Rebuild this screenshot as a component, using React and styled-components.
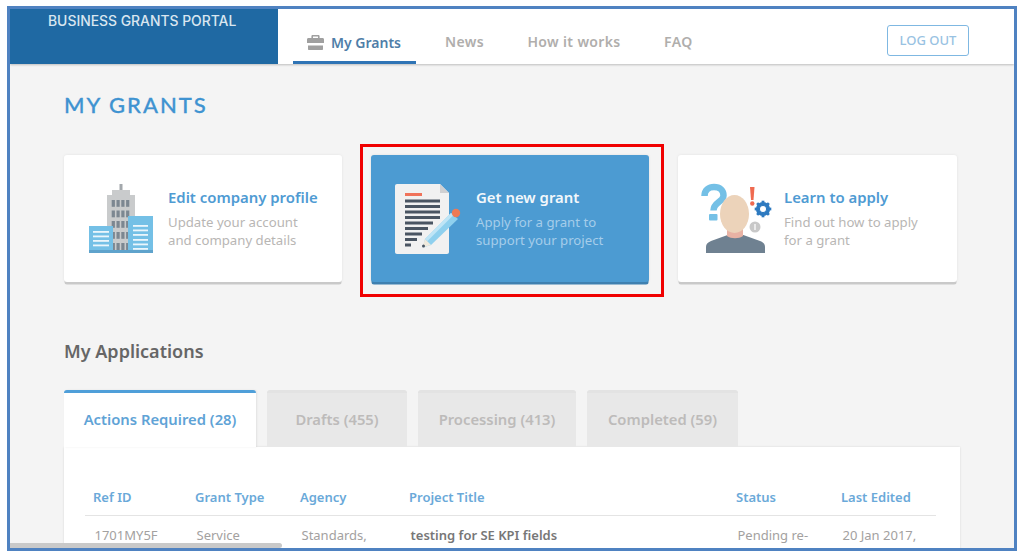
import React from "react";
import styled, { createGlobalStyle } from "styled-components";

const Global = createGlobalStyle`
  html, body { margin: 0; padding: 0; background: #fff; }
  body { font-family: "Noto Sans", "Open Sans", sans-serif; }
  * { box-sizing: border-box; }
`;

const Frame = styled.div`
  position: relative;
  width: 1010px;
  height: 545px;
  margin: 6px 0 0 7px;
  border: 3px solid #4f82c1;
  background: #f4f4f4;
  overflow: hidden;
`;

const Header = styled.header`
  display: flex;
  height: 55px;
  background: #fff;
  box-shadow: 0 1px 2px rgba(0, 0, 0, 0.22);
`;

const Brand = styled.div`
  width: 268px;
  background: #1f69a3;
  color: #d9e6f0;
  font-family: "Inter", sans-serif;
  font-size: 13.9px;
  font-weight: 500;
  line-height: 15px;
  padding: 5px 0 0 38px;
  white-space: nowrap;
`;

const Nav = styled.nav`
  display: flex;
  margin-left: 15px;
  gap: 43.5px;
`;

const NavItem = styled.a`
  display: flex;
  align-items: center;
  gap: 7px;
  height: 55px;
  padding: ${(p) => (p.$active ? "14px 15px 0 14px" : "10px 0 0")};
  margin-right: ${(p) => (p.$active ? "-14.5px" : "0")};
  font-size: 14px;
  font-weight: 600;
  letter-spacing: ${(p) => (p.$active ? "0" : "0.35px")};
  color: ${(p) => (p.$active ? "#4f7ea8" : "#b0aeac")};
  border-bottom: ${(p) => (p.$active ? "3px solid #2f74b5" : "none")};
`;

const LogOut = styled.button`
  width: 82px;
  height: 31px;
  margin: 16px 45px 0 auto;
  background: #fff;
  border: 1px solid #7fb8e2;
  border-radius: 3px;
  color: #98c2e2;
  font-family: inherit;
  font-size: 13px;
  font-weight: 500;
  padding: 0 0 2px;
`;

const Main = styled.main`
  padding: 29px 0 0 54px;
`;

const Title = styled.h1`
  margin: 0;
  font-family: "Lato", sans-serif;
  font-size: 22px;
  line-height: 24px;
  font-weight: 500;
  letter-spacing: 2px;
  color: #3f93d1;
  -webkit-text-stroke: 0.3px #3f93d1;
`;

const Cards = styled.section`
  display: flex;
  gap: 29px;
  margin-top: 38px;
`;

const Card = styled.a`
  position: relative;
  display: flex;
  width: ${(p) => p.$w || 278}px;
  height: 127px;
  border-radius: 3px;
  padding: 24px 0 0 ${(p) => p.$pad}px;
  gap: ${(p) => p.$gap}px;
  background: ${(p) => (p.$primary ? "#4c9bd2" : "#fff")};
  box-shadow: 0 3px 0 -0.5px ${(p) => (p.$primary ? "#3f80b0" : "#c9c9c9")}, 0 0 3px rgba(0, 0, 0, 0.08);
  ${(p) =>
    p.$marked &&
    `&::after {
      content: "";
      position: absolute;
      left: -11px;
      right: -15px;
      top: -11px;
      bottom: -15px;
      border: 3px solid #f00000;
    }`}
`;

const CardIcon = styled.svg`
  flex: none;
  width: ${(p) => p.$w}px;
  height: 82px;
  margin-top: 1px;
`;

const CardText = styled.div`
  padding-top: 9px;
`;

const CardTitle = styled.div`
  font-size: 14.9px;
  line-height: 19px;
  font-weight: 600;
  color: ${(p) => (p.$primary ? "#f2f7fb" : "#4f9bd3")};
`;

const CardDesc = styled.div`
  margin-top: 6px;
  font-size: 13.2px;
  line-height: 18px;
  color: ${(p) => (p.$primary ? "#a5cdea" : "#b8b6b4")};
`;

const Section = styled.h2`
  margin: 57px 0 0;
  font-size: 18px;
  line-height: 24px;
  font-weight: 600;
  color: #666;
`;

const Tabs = styled.div`
  display: flex;
  gap: 11px;
  margin-top: 27px;
`;

const Tab = styled.div`
  display: flex;
  align-items: center;
  justify-content: center;
  width: ${(p) => p.$w}px;
  height: 57px;
  padding-bottom: 2px;
  border-radius: 3px 3px 0 0;
  font-size: 14.8px;
  font-weight: 600;
  background: ${(p) => (p.$active ? "#fff" : "#e8e8e8")};
  color: ${(p) => (p.$active ? "#5fa3d6" : "#bdbbba")};
  border-top: 3px solid ${(p) => (p.$active ? "#4f9fd9" : "#e3e3e3")};
  box-shadow: ${(p) => (p.$active ? "1px 0 2px rgba(0,0,0,0.08)" : "none")};
`;

const Panel = styled.section`
  width: 896px;
  height: 110px;
  background: #fff;
  padding: 37px 24px 0 21px;
  box-shadow: 0 0 2px rgba(0, 0, 0, 0.12);
`;

const Row = styled.div`
  display: grid;
  grid-template-columns: 102px 105px 109px 327px 105px 103px;
  height: ${(p) => p.$h}px;
  align-items: center;
  ${(p) => p.$head && "border-bottom: 1px solid #e4e4e4; padding-bottom: 5px;"}
`;

const Head = styled.div`
  padding-left: 8px;
  font-size: 13px;
  font-weight: 600;
  color: #6aa9d9;
  white-space: nowrap;
`;

const Cell = styled.div`
  padding-left: 9.5px;
  font-size: 13px;
  font-weight: ${(p) => (p.$bold ? 600 : 400)};
  color: ${(p) => (p.$bold ? "#777" : "#a3a1a0")};
  white-space: nowrap;
`;

const Scrollbar = styled.div`
  position: absolute;
  left: 0;
  bottom: 0;
  width: 272px;
  height: 5px;
  background: #c9c9c9;
  border-radius: 0 3px 3px 0;
`;

const Briefcase = () => (
  <svg width="17" height="15" viewBox="0 0 17 15">
    <path d="M6 3V1.500h5V3h1.600V1.200C12.600.5 12 0 11.400 0H5.600C5 0 4.400.5 4.400 1.200V3z" fill="#a0a0a0" />
    <path d="M1.500 3h14c.8 0 1.500.6 1.500 1.400V8H0V4.400C0 3.600.7 3 1.500 3z" fill="#a0a0a0" />
    <path d="M1 10.500h15V14c0 .6-.4 1-1 1H2c-.6 0-1-.4-1-1z" fill="#a0a0a0" />
  </svg>
);

const BuildingIcon = () => (
  <CardIcon $w={65} viewBox="0 0 65 82">
    <rect x="30.500" y="4" width="3" height="8" fill="#a3a8ac" />
    <rect x="23" y="10" width="18" height="6" fill="#c9cbcc" />
    <rect x="18" y="15" width="28" height="58" fill="#c9cbcc" />
    {[20, 30.500, 41, 52, 63].map((y, r) =>
      [0, 1, 2, 3].map((c) => (
        <rect key={`${r}-${c}`} x={22.700 + c * 4.800} y={y} width="3.200" height={r === 4 ? 9 : 6.800} fill="#7c8791" />
      ))
    )}
    <rect x="0" y="46" width="24" height="27" fill="#74c0e6" />
    <rect x="39" y="36" width="25" height="37" fill="#74c0e6" />
    {[51, 55.500, 60, 64.500].map((y) => (
      <rect key={y} x="4" y={y} width="16" height="1.800" fill="#eaf6fc" />
    ))}
    {[41, 45.500, 50, 55, 59.500, 64].map((y) => (
      <rect key={y} x="44" y={y + 4} width="15" height="1.800" fill="#eaf6fc" />
    ))}
    <rect x="0" y="70" width="64" height="3" fill="#5fa3cc" />
  </CardIcon>
);

const docLines = [35, 35, 35, 35, 28, 23, 17, 12, 6];

const DocumentIcon = () => (
  <CardIcon $w={66} viewBox="0 0 66 82">
    <path d="M2 4h43l9 9v59c0 1.100-.9 2-2 2H2c-1.100 0-2-.9-2-2V6c0-1.100.9-2 2-2z" fill="#f1f1f1" />
    <path d="M45 4l9 9h-9z" fill="#cfd0d2" />
    <rect x="10" y="13" width="17" height="3" fill="#f0735a" />
    {docLines.map((w, i) => (
      <rect key={i} x="10" y={19.500 + i * 5.500} width={w} height="3" fill="#4a5562" />
    ))}
    <path d="M30 59L56 33l7 6-27 26-8 2.500z" fill="#8fd0ee" />
    <path d="M30 59L56 33l2.500 2-26 26z" fill="#bfe5f6" />
    <path d="M30 59l6 6-8.500 2.500z" fill="#efe9dc" />
    <circle cx="28.500" cy="66" r="1.500" fill="#4a5562" />
    <circle cx="61" cy="33" r="4.200" fill="#ee7a55" />
  </CardIcon>
);

const LearnIcon = () => (
  <CardIcon $w={72} viewBox="0 0 72 82">
    <path d="M4.500 16C4.500 10 9 7 14 7c6 0 9.500 3.500 9.500 8.500 0 6.500-10 6.500-10 15" fill="none" stroke="#74c0e6" strokeWidth="6.500" />
    <rect x="9" y="34" width="8.500" height="6.500" rx="1" fill="#74c0e6" />
    <path d="M6 73v-6c0-3 1.500-4.500 5-6l18-6.500h13l18 6.500c3.500 1.500 5 3 5 6v6z" fill="#6f8191" />
    <path d="M27 47h16v9c-4 3-12 3-16 0z" fill="#e8b2a4" />
    <ellipse cx="34.500" cy="34" rx="14.500" ry="19" fill="#ecd3ba" />
    <path d="M50 7h4.500l-1 13h-2.500z" fill="#ef6a50" />
    <circle cx="52.300" cy="23.500" r="2.200" fill="#ef6a50" />
    <g transform="translate(63 29)">
      <circle r="5.300" fill="none" stroke="#2e7ac0" strokeWidth="3.600" />
      {[0, 45, 90, 135].map((a) => (
        <rect key={a} x="-1.400" y="-8.300" width="2.800" height="16.600" fill="#2e7ac0" transform={`rotate(${a})`} />
      ))}
      <circle r="3" fill="#fff" />
    </g>
    <circle cx="55" cy="47" r="5.500" fill="#c8c8c8" />
    <rect x="54.200" y="44" width="1.600" height="6" fill="#f3f3f3" />
  </CardIcon>
);

export default function App() {
  return (
    <>
      <Global />
      <Frame>
        <Header>
          <Brand>BUSINESS GRANTS PORTAL</Brand>
          <Nav>
            <NavItem $active>
              <Briefcase />
              My Grants
            </NavItem>
            <NavItem>News</NavItem>
            <NavItem>How it works</NavItem>
            <NavItem>FAQ</NavItem>
          </Nav>
          <LogOut>LOG OUT</LogOut>
        </Header>
        <Main>
          <Title>MY GRANTS</Title>
          <Cards>
            <Card $pad={25} $gap={14}>
              <BuildingIcon />
              <CardText>
                <CardTitle>Edit company profile</CardTitle>
                <CardDesc>Update your account<br />and company details</CardDesc>
              </CardText>
            </Card>
            <Card $primary $marked $pad={24} $gap={15}>
              <DocumentIcon />
              <CardText>
                <CardTitle $primary>Get new grant</CardTitle>
                <CardDesc $primary>Apply for a grant to<br />support your project</CardDesc>
              </CardText>
            </Card>
            <Card $w={279} $pad={22} $gap={12}>
              <LearnIcon />
              <CardText>
                <CardTitle>Learn to apply</CardTitle>
                <CardDesc>Find out how to apply<br />for a grant</CardDesc>
              </CardText>
            </Card>
          </Cards>
          <Section>My Applications</Section>
          <Tabs>
            <Tab $active $w={192}>Actions Required (28)</Tab>
            <Tab $w={140}>Drafts (455)</Tab>
            <Tab $w={158}>Processing (413)</Tab>
            <Tab $w={151}>Completed (59)</Tab>
          </Tabs>
          <Panel>
            <Row $head $h={32}>
              <Head>Ref ID</Head>
              <Head>Grant Type</Head>
              <Head>Agency</Head>
              <Head>Project Title</Head>
              <Head>Status</Head>
              <Head>Last Edited</Head>
            </Row>
            <Row $h={38}>
              <Cell>1701MY5F</Cell>
              <Cell>Service</Cell>
              <Cell>Standards,</Cell>
              <Cell $bold>testing for SE KPI fields</Cell>
              <Cell>Pending re-</Cell>
              <Cell>20 Jan 2017,</Cell>
            </Row>
          </Panel>
        </Main>
        <Scrollbar />
      </Frame>
    </>
  );
}
